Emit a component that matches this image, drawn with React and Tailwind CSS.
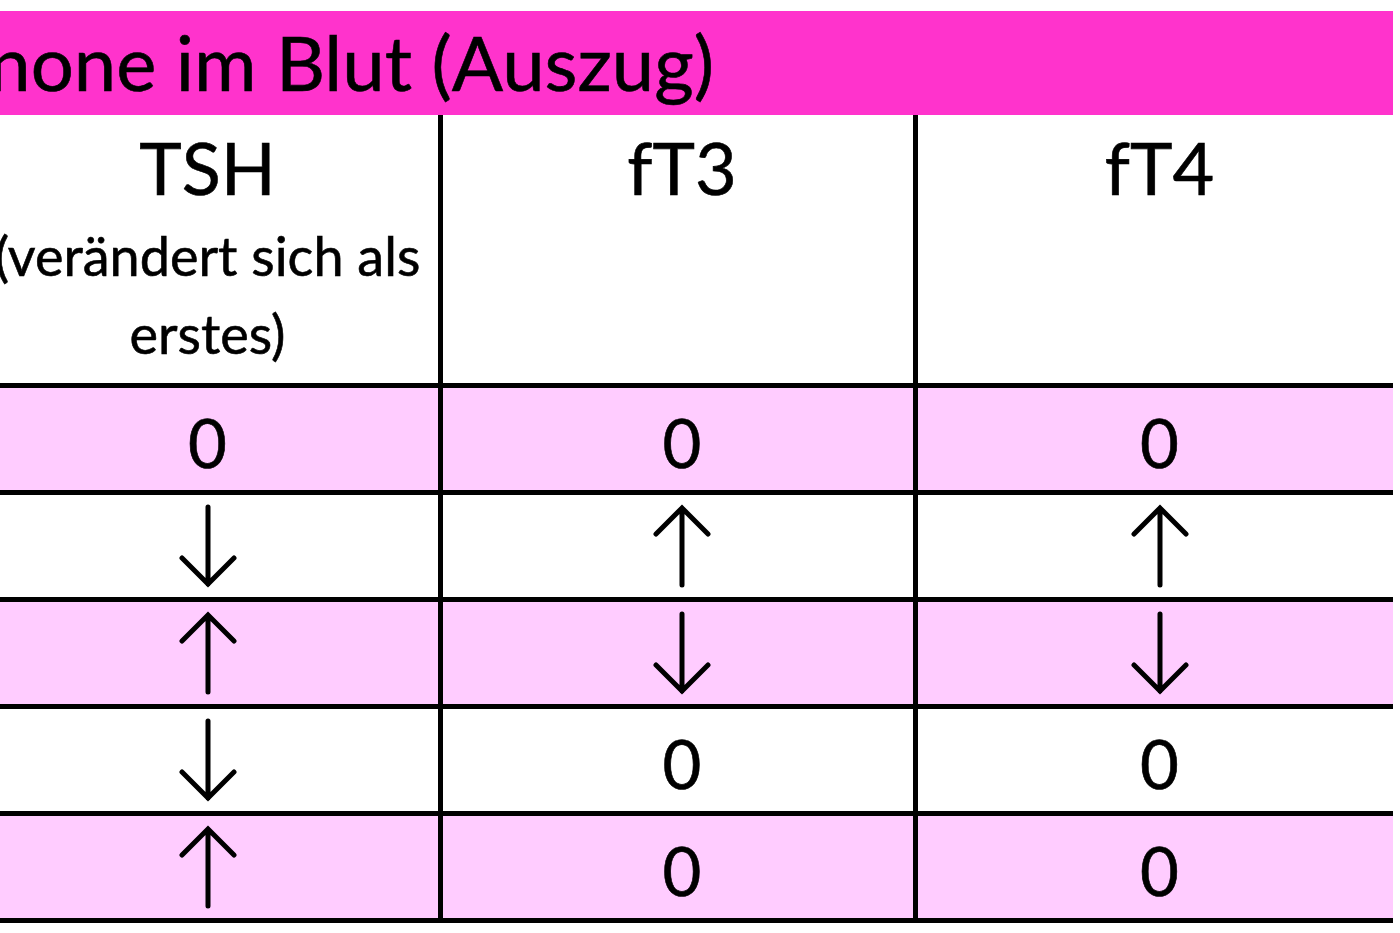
import React from "react";

const font = { fontFamily: "Lato, 'Open Sans', sans-serif" };

function Arrow({ dir }) {
  const d =
    dir === "down"
      ? "M29 3 V80 M3 54 L29 80 L55 54"
      : "M29 81 V4 M3 30 L29 4 L55 30";
  return (
    <svg width="58" height="84" viewBox="0 0 58 84" fill="none">
      <path d={d} stroke="#000" strokeWidth="5" strokeLinecap="round" strokeLinejoin="miter" />
    </svg>
  );
}

function Cell({ v, first }) {
  return (
    <div
      className={`flex h-[102px] items-center justify-center pl-[8px] ${first ? "" : "border-l-[5px] border-black"}`}
    >
      {v === "up" || v === "down" ? (
        <Arrow dir={v} />
      ) : (
        <span className="pt-[6px] text-[67px] leading-none text-black">{v}</span>
      )}
    </div>
  );
}

export default function App() {
  const rows = [
    ["0", "0", "0"],
    ["down", "up", "up"],
    ["up", "down", "down"],
    ["down", "0", "0"],
    ["up", "0", "0"],
  ];
  return (
    <div
      className="h-[933px] w-[1400px] overflow-hidden bg-white [-webkit-text-stroke:0.6px_black]"
      style={font}
    >
      <div className="mt-[11px] w-[1393px] overflow-hidden">
        <div className="flex h-[104px] items-center bg-[#ff33cc]">
          <div className="flex w-[714px] shrink-0 justify-end">
            <span className="whitespace-nowrap pb-[2px] text-[76px] leading-none text-black">
              none im Blut (Auszug)
            </span>
          </div>
        </div>
        <div className="ml-[-31px] w-[1424px]">
          <div className="grid grid-cols-[469px_475px_480px]">
            <div className="flex h-[268px] flex-col items-center pl-[8px] pt-[9px] text-black">
              <div className="text-[72px] leading-[86px]">TSH</div>
              <div className="mt-[7px] whitespace-nowrap text-center text-[54px] leading-[78px]">
                (verändert sich als
                <br />
                erstes)
              </div>
            </div>
            <div className="flex h-[268px] flex-col items-center border-l-[5px] border-black pl-[8px] pt-[9px] text-black">
              <div className="text-[72px] leading-[86px]">fT3</div>
            </div>
            <div className="flex h-[268px] flex-col items-center border-l-[5px] border-black pl-[8px] pt-[9px] text-black">
              <div className="text-[72px] leading-[86px]">fT4</div>
            </div>
          </div>
          {rows.map((r, i) => (
            <div
              key={i}
              className={`grid grid-cols-[469px_475px_480px] border-t-[5px] border-black ${
                i % 2 === 0 ? "bg-[#ffccff]" : "bg-white"
              } ${i === rows.length - 1 ? "border-b-[5px]" : ""}`}
            >
              {r.map((v, j) => (
                <Cell key={j} v={v} first={j === 0} />
              ))}
            </div>
          ))}
        </div>
      </div>
    </div>
  );
}
